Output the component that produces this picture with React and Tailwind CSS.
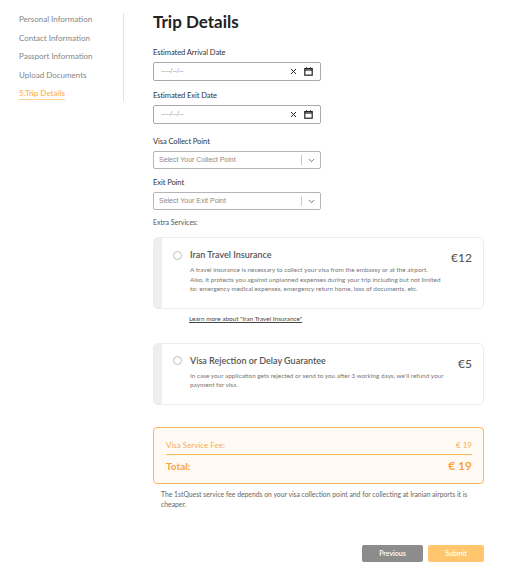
import { X, ChevronDown } from "lucide-react";

const steps = [
  "Personal Information",
  "Contact Information",
  "Passport Information",
  "Upload Documents",
];

function CalendarIcon() {
  return (
    <svg width="9" height="9" viewBox="0 0 9 9" fill="none" stroke="#222" strokeWidth="1.2">
      <rect x="0.8" y="1.6" width="7.4" height="6.6" />
      <line x1="0.8" y1="3" x2="8.2" y2="3" />
      <line x1="2.5" y1="0.3" x2="2.5" y2="2" />
      <line x1="6.5" y1="0.3" x2="6.5" y2="2" />
    </svg>
  );
}

function DateField({ label, mt }) {
  return (
    <div className={mt}>
      <div className="text-[7.6px] leading-[10px] text-[#333] tracking-[-0.1px]">{label}</div>
      <div className="mt-[5px] h-[19px] w-[168px] rounded-[2px] border border-[#a9a9a9] flex items-center pl-[7px] pr-[7px]">
        <span className="flex-1 font-['Liberation_Sans',Arial,sans-serif] text-[7px] text-[#9a9a9a]">
          ----/--/--
        </span>
        <X size={9} strokeWidth={2.6} className="text-[#222] mr-[6px]" />
        <CalendarIcon />
      </div>
    </div>
  );
}

function SelectField({ label, placeholder, mt }) {
  return (
    <div className={mt}>
      <div className="text-[7.6px] leading-[10px] text-[#333] tracking-[-0.1px]">{label}</div>
      <div className="mt-[5px] h-[18px] w-[168px] rounded-[2px] border border-[#b5b5b5] flex items-center pl-[5px]">
        <span className="flex-1 font-['Liberation_Sans',Arial,sans-serif] text-[7px] text-[#8a8a8a]">
          {placeholder}
        </span>
        <span className="h-[10px] w-px bg-[#cccccc]" />
        <ChevronDown size={9} strokeWidth={2.4} className="text-[#666] mx-[4.5px]" />
      </div>
    </div>
  );
}

function ServiceCard({ title, price, lines, className = "" }) {
  return (
    <div className={"flex w-[331px] rounded-[5px] border border-[#ececec] overflow-hidden bg-white " + className}>
      <div className="w-[8px] bg-[#eeeeee]" />
      <div className="flex-1 flex pl-[11px] pr-[11px] pt-[11px] pb-[14px]">
        <span className="mt-[1.5px] h-[9px] w-[9px] rounded-full border border-[#bdbdbd]" />
        <div className="ml-[8px] flex-1">
          <div className="text-[9px] leading-[12px] font-semibold text-[#555]">{title}</div>
          <p className="mt-[4px] text-[6.4px] leading-[9.5px] text-[#777] whitespace-nowrap">
            {lines.map((l, i) => (
              <span key={i} className="block">
                {l}
              </span>
            ))}
          </p>
        </div>
        <div className="text-[12px] leading-[16px] font-medium text-[#555] mt-[1px]">{price}</div>
      </div>
    </div>
  );
}

export default function App() {
  return (
    <div className="flex w-[528px] min-h-[587px] bg-white font-['Lato','Open_Sans',sans-serif]">
      <aside className="w-[124px] shrink-0 pl-[19px] pt-[13px]">
        <div className="h-[88px] border-r border-[#e3e3e3] flex flex-col gap-[6.5px]">
          {steps.map((s) => (
            <div key={s} className="text-[8px] leading-[12px] text-[#858585]">
              {s}
            </div>
          ))}
          <div className="self-start text-[8px] leading-[12px] font-semibold text-[#ffb456] border-b border-[#ffcf94]">
            5.Trip Details
          </div>
        </div>
      </aside>

      <main className="ml-[29px] w-[331px] pt-[12px]">
        <h1 className="text-[17px] leading-[20px] font-bold text-[#222]">Trip Details</h1>

        <DateField label="Estimated Arrival Date" mt="mt-[15px]" />
        <DateField label="Estimated Exit Date" mt="mt-[9px]" />
        <SelectField label="Visa Collect Point" placeholder="Select Your Collect Point" mt="mt-[12px]" />
        <SelectField label="Exit Point" placeholder="Select Your Exit Point" mt="mt-[8px]" />

        <div className="mt-[7px] text-[7px] leading-[10px] text-[#555]">Extra Services:</div>

        <ServiceCard
          title="Iran Travel Insurance"
          price="€12"
          className="mt-[10px]"
          lines={[
            "A travel insurance is necessary to collect your visa from the embassy or at the airport.",
            "Also, it protects you against unplanned expenses during your trip including but not limited",
            "to: emergency medical expenses, emergency return home, loss of documents, etc.",
          ]}
        />
        <div className="mt-[5px] pl-[36px] text-[6.4px] leading-[9px] text-[#444] underline">
          Learn more about "Iran Travel Insurance"
        </div>

        <ServiceCard
          title="Visa Rejection or Delay Guarantee"
          price="€5"
          className="mt-[20px]"
          lines={[
            "In case your application gets rejected or send to you after 3 working days, we'll refund your",
            "payment for visa.",
          ]}
        />

        <div className="mt-[22px] rounded-[4px] border border-[#ffb658] bg-[#fffaf4] pl-[12px] pr-[11px] pt-[12px] pb-[11px]">
          <div className="flex justify-between pb-[4px] border-b border-[#ffb658] text-[8px] leading-[10px] text-[#f9ab4e]">
            <span>Visa Service Fee:</span>
            <span>€ 19</span>
          </div>
          <div className="mt-[5px] flex justify-between items-center text-[#f9a440] font-bold">
            <span className="text-[10px] leading-[12px]">Total:</span>
            <span className="text-[12px] leading-[12px]">€ 19</span>
          </div>
        </div>

        <p className="mt-[5px] pl-[8px] text-[6.8px] leading-[10px] text-[#666] whitespace-nowrap">
          The 1stQuest service fee depends on your visa collection point and for collecting at Iranian airports it is
          <br />
          cheaper.
        </p>

        <div className="mt-[36px] flex justify-end gap-[5px]">
          <button className="h-[17px] w-[61px] rounded-[2px] bg-[#8c8c8c] text-white text-[7px] font-semibold">
            Previous
          </button>
          <button className="h-[17px] w-[56px] rounded-[2px] bg-[#ffc66d] text-white text-[7px] font-semibold">
            Submit
          </button>
        </div>
      </main>
    </div>
  );
}
